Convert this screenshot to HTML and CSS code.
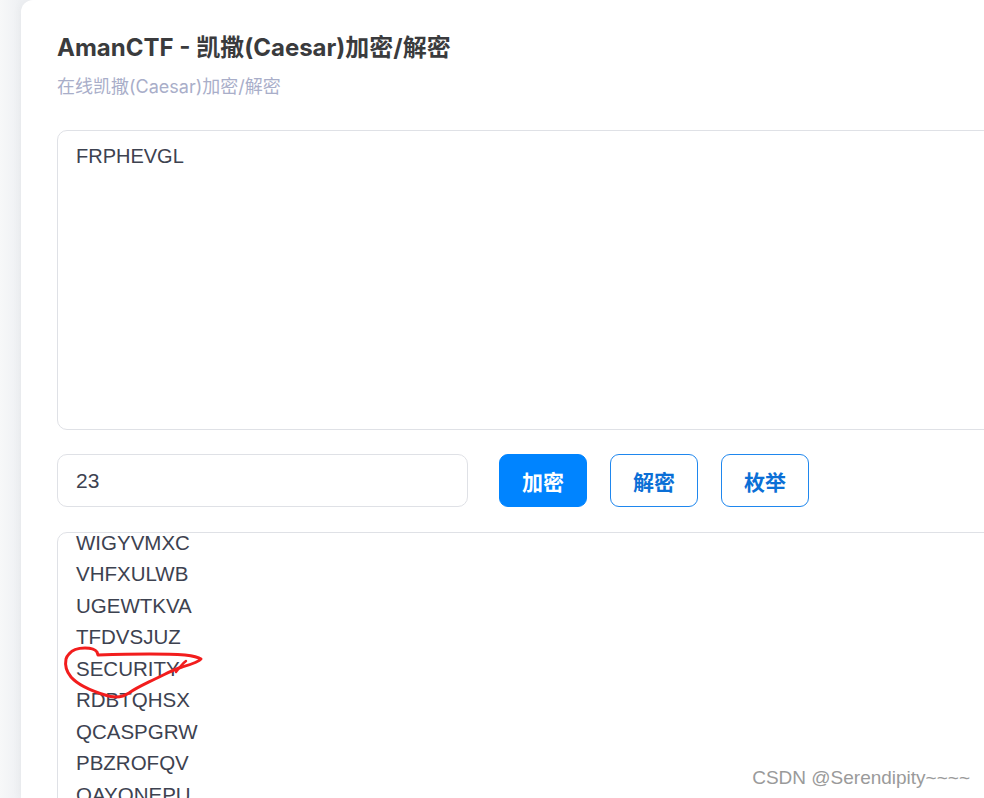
FILE: index.html
```html
<!DOCTYPE html>
<html lang="zh-CN">
<head>
<meta charset="utf-8">
<title>AmanCTF - 凯撒(Caesar)加密/解密</title>
<link rel="stylesheet" href="styles.css">
</head>
<body>
<div class="page">
  <main class="card">
    <h1 class="title">AmanCTF - 凯撒(Caesar)加密/解密</h1>
    <p class="subtitle">在线凯撒(Caesar)加密/解密</p>
    <textarea class="source" spellcheck="false">FRPHEVGL</textarea>
    <div class="controls">
      <input class="shift" type="text" value="23">
      <button class="btn btn-primary">加密</button>
      <button class="btn btn-outline">解密</button>
      <button class="btn btn-outline">枚举</button>
    </div>
    <div class="result">
      <div class="result-lines">
        <div class="line">WIGYVMXC</div>
        <div class="line">VHFXULWB</div>
        <div class="line">UGEWTKVA</div>
        <div class="line">TFDVSJUZ</div>
        <div class="line">SECURITY</div>
        <div class="line">RDBTQHSX</div>
        <div class="line">QCASPGRW</div>
        <div class="line">PBZROFQV</div>
        <div class="line">OAYQNEPU</div>
        <div class="line">NZXPMDOT</div>
      </div>
    </div>
  </main>
</div>
<svg class="markup" width="984" height="798" viewBox="0 0 984 798" xmlns="http://www.w3.org/2000/svg">
  <path d="M69,654 C72,650 78,648 85,648 C91,648 95,649 97,652 L98,655 C125,654 160,653 185,655 C193,656 198,657 201,659 C199,662 192,664 182,667 C172,670 164,675 155,679 C145,684 136,688 129,693 C123,697 114,698 105,695 C92,691 78,685 71,677 C66,671 65,664 66,659 C67,656 68,655 69,654" fill="none" stroke="#f21d1d" stroke-width="3" stroke-linecap="round" stroke-linejoin="round"/>
  <path d="M186,661 C182,664 179,668 176,672" fill="none" stroke="#f21d1d" stroke-width="2.4" stroke-linecap="round"/>
</svg>
<div class="watermark">CSDN @Serendipity~~~~</div>
</body>
</html>
```

FILE: styles.css
```css
html, body {
  margin: 0;
  padding: 0;
  overflow: hidden;
  width: 984px;
  height: 798px;
  background: #f3f4f6;
}

body {
  position: relative;
  font-family: "Liberation Sans", Arial, "Noto Sans CJK SC", sans-serif;
}

.page {
  display: flex;
  padding-left: 21px;
  height: 798px;
  background: linear-gradient(to right, #f7f8f9 0, #eef0f3 21px);
}

.card {
  flex: none;
  width: 1100px;
  background: #ffffff;
  border-radius: 12px 0 0 0;
  padding: 30px 0 0 36px;
  box-sizing: border-box;
  box-shadow: -2px 0 8px rgba(0, 0, 0, 0.03);
}

.title {
  margin: 0;
  font-family: Inter, "Noto Sans CJK SC", sans-serif;
  font-size: 24px;
  line-height: 36px;
  font-weight: 700;
  color: #3a3b3d;
}

.subtitle {
  margin: 8px 0 0;
  font-family: Inter, "Noto Sans CJK SC", sans-serif;
  font-size: 18px;
  line-height: 26px;
  color: #a9aec9;
}

.source {
  display: block;
  margin: 30px 0 0;
  width: 1000px;
  height: 300px;
  box-sizing: border-box;
  border: 1px solid #dfe1e6;
  border-radius: 10px;
  padding: 10px 18px;
  font-family: "Liberation Sans", Arial, sans-serif;
  font-size: 20px;
  line-height: 1.5715;
  color: #3d4250;
  resize: none;
  outline: none;
  background: #fff;
}

.controls {
  display: flex;
  align-items: center;
  margin-top: 24px;
  height: 53px;
}

.shift {
  width: 411px;
  height: 53px;
  box-sizing: border-box;
  border: 1px solid #dfe1e6;
  border-radius: 10px;
  padding: 0 18px;
  font-family: "Liberation Sans", Arial, sans-serif;
  font-size: 21px;
  color: #3d4250;
  outline: none;
  margin-right: 31px;
}

.btn {
  width: 88px;
  height: 53px;
  box-sizing: border-box;
  border-radius: 9px;
  font-family: "Noto Sans CJK SC", sans-serif;
  font-size: 21px;
  font-weight: 700;
  margin-right: 23px;
  cursor: pointer;
  padding: 0;
}

.btn-primary {
  background: #0084ff;
  border: 1px solid #0084ff;
  color: #ffffff;
}

.btn-outline {
  background: #ffffff;
  border: 1px solid #1f87ee;
  color: #0b6fd6;
}

.result {
  margin-top: 25px;
  width: 1000px;
  height: 300px;
  box-sizing: border-box;
  border: 1px solid #dfe1e6;
  border-radius: 10px;
  padding: 0 18px;
  overflow: hidden;
}

.result-lines {
  margin-top: -6px;
  font-family: "Liberation Sans", Arial, sans-serif;
  font-size: 20.5px;
  line-height: 31.43px;
  color: #3d4250;
}

.markup {
  position: absolute;
  left: 0;
  top: 0;
  pointer-events: none;
}

.watermark {
  position: absolute;
  right: 14px;
  top: 765px;
  font-family: "Liberation Sans", Arial, sans-serif;
  font-size: 19px;
  line-height: 26px;
  color: #9a9a9a;
  text-shadow: 0 0 1px #ffffff;
}
```
